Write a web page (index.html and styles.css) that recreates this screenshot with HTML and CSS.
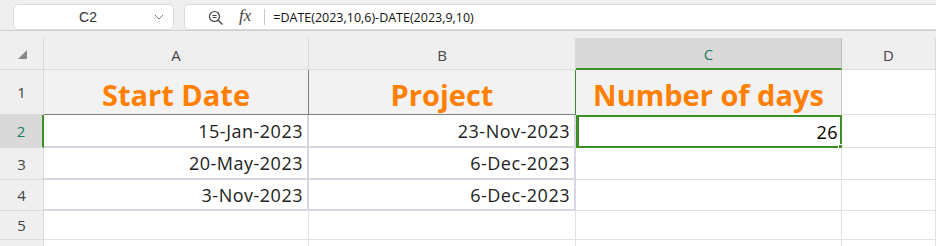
FILE: index.html
```html
<!DOCTYPE html>
<html>
<head>
<meta charset="utf-8">
<link rel="stylesheet" href="styles.css">
</head>
<body>
<div class="app">
  <div class="toolbar">
    <div class="namebox">
      <span class="name">C2</span>
      <svg class="chev" width="10" height="6" viewBox="0 0 10 6"><path d="M1 1 L5 5 L9 1" fill="none" stroke="#777" stroke-width="1"/></svg>
    </div>
    <div class="formulabar">
      <svg class="zoomicon" width="16" height="16" viewBox="0 0 16 16"><circle cx="6.5" cy="6.5" r="5" fill="none" stroke="#444" stroke-width="1.2"/><path d="M10.2 10.2 L14.5 14.5" stroke="#444" stroke-width="1.3"/><path d="M4.5 5.5 H8.5 M4.5 7.5 H8.5" stroke="#444" stroke-width="1"/></svg>
      <span class="fx">fx</span>
      <span class="sep"></span>
      <span class="formula">=DATE(2023,10,6)-DATE(2023,9,10)</span>
    </div>
  </div>
  <div class="sheet">
    <div class="corner"><span class="tri"></span></div>
    <div class="ch">A</div>
    <div class="ch">B</div>
    <div class="ch sel">C</div>
    <div class="ch">D</div>

    <div class="rh">1</div>
    <div class="c h1 a1">Start Date</div>
    <div class="c h1 b1">Project</div>
    <div class="c h1 c1">Number of days</div>
    <div class="c"></div>

    <div class="rh rsel">2</div>
    <div class="c d ab">15-Jan-2023</div>
    <div class="c d ab">23-Nov-2023</div>
    <div class="c d active">26<span class="handle"></span></div>
    <div class="c"></div>

    <div class="rh">3</div>
    <div class="c d ab">20-May-2023</div>
    <div class="c d ab">6-Dec-2023</div>
    <div class="c"></div>
    <div class="c"></div>

    <div class="rh">4</div>
    <div class="c d ab">3-Nov-2023</div>
    <div class="c d ab">6-Dec-2023</div>
    <div class="c"></div>
    <div class="c"></div>

    <div class="rh">5</div>
    <div class="c"></div>
    <div class="c"></div>
    <div class="c"></div>
    <div class="c"></div>

    <div class="rh last"></div>
    <div class="c last"></div>
    <div class="c last"></div>
    <div class="c last"></div>
    <div class="c last"></div>
  </div>
</div>
</body>
</html>
```

FILE: styles.css
```css
* { box-sizing: border-box; }
html, body { margin: 0; padding: 0; }
body {
  width: 936px;
  height: 246px;
  overflow: hidden;
  background: #efefef;
  font-family: "Noto Sans", "Open Sans", sans-serif;
}
.app { width: 936px; height: 246px; overflow: hidden; }
.toolbar {
  display: flex;
  align-items: center;
  height: 31px;
  padding: 4px 0 0 13px;
  border-bottom: 1px solid #cfcfcf;
  gap: 10px;
}
.namebox {
  width: 161px;
  height: 26px;
  background: #fff;
  border: 1px solid #dcdcdc;
  border-radius: 5px;
  display: flex;
  align-items: center;
  position: relative;
}
.name {
  flex: 1;
  text-align: center;
  font-size: 14px;
  color: #333;
  font-family: "Liberation Sans", sans-serif;
  padding-left: 8px;
}
.chev { margin-right: 9px; }
.formulabar {
  flex: 1;
  height: 26px;
  background: #fff;
  border: 1px solid #dcdcdc;
  border-right: none;
  border-radius: 5px 0 0 5px;
  display: flex;
  align-items: center;
  padding-left: 23px;
}
.zoomicon { margin-top: 1px; }
.fx {
  font-family: "Liberation Serif", serif;
  font-style: italic;
  font-size: 17px;
  color: #444;
  margin-left: 15px;
  margin-top: -2px;
}
.sep {
  width: 1px;
  height: 16px;
  background: #c8c8c8;
  margin-left: 13px;
}
.formula {
  font-family: "Open Sans", sans-serif;
  font-size: 12.5px;
  color: #111;
  margin-left: 8px;
}
.sheet {
  margin-top: 7px;
  display: grid;
  grid-template-columns: 44px 265px 267px 266px 94px;
  grid-template-rows: 32px 45px 33px 32px 31px 29px 7px;
}
.corner, .ch, .rh {
  background: #efefef;
  color: #444;
  font-size: 15px;
  display: flex;
  align-items: center;
  justify-content: center;
  font-family: "Open Sans", sans-serif;
}
.corner { border-right: 1px solid #dadada; border-bottom: 1px solid #dadada; position: relative; }
.tri {
  position: absolute;
  left: 18px;
  top: 12px;
  width: 0;
  height: 0;
  border-left: 9px solid transparent;
  border-bottom: 9px solid #8a8a8a;
}
.ch { border-right: 1px solid #dadada; border-bottom: 1px solid #dadada; padding-top: 2px; }
.ch.sel { background: #d9d9d9; color: #1d7a5a; border-bottom: 2px solid #3e8e27; border-right-color: #b9b9b9; }
.rh { border-right: 1px solid #dadada; border-bottom: 1px solid #dadada; }
.rh.rsel { background: #d9d9d9; color: #1d7a5a; border-right: 2px solid #3e8e27; }
.c {
  background: #fff;
  border-right: 1px solid #e1e1e1;
  border-bottom: 1px solid #e1e1e1;
  position: relative;
}
.last { border-bottom: none; }
.h1 {
  background: #f2f2f2;
  color: #ff7f00;
  font-weight: bold;
  font-size: 29px;
  display: flex;
  align-items: center;
  justify-content: center;
  font-family: "Open Sans", sans-serif;
  padding-top: 4px;
}
.a1 { border-right: 1px solid #7f7f7f; border-bottom: 1px solid #7f7f7f; }
.b1 { border-right: 1px solid #3e8e27; border-bottom: 1px solid #7f7f7f; }
.c1 { border-right: 1px solid #c8c8c8; border-bottom: none; }
.d {
  display: flex;
  align-items: center;
  justify-content: flex-end;
  padding-right: 4px;
  font-size: 18px;
  color: #222;
  font-family: "Open Sans", sans-serif;
  letter-spacing: 0.5px;
}
.ab { border-right: 2px solid #d7d7e4; border-bottom: 2px solid #d7d7e4; }
.active { border: 2px solid #3e8e27; border-left-width: 3px; color: #000; padding-right: 2px; }
.handle {
  position: absolute;
  right: -4px;
  bottom: -4px;
  width: 6px;
  height: 6px;
  background: #3e8e27;
  border: 1px solid #fff;
}
```
